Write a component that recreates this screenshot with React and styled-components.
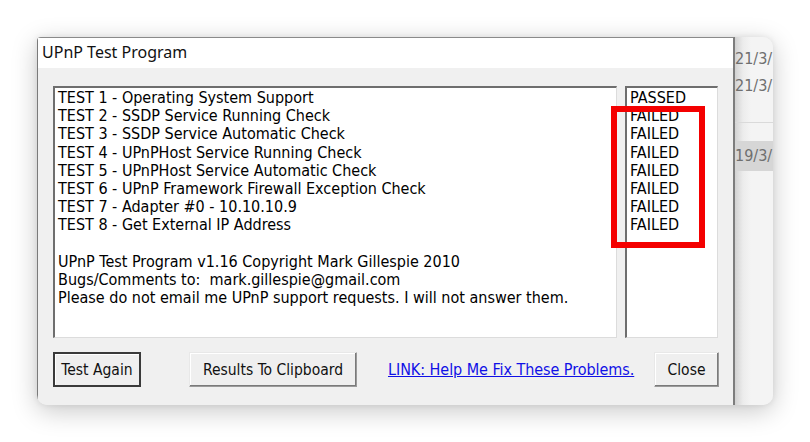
import React from 'react'
import styled, { createGlobalStyle } from 'styled-components'

const GlobalStyle = createGlobalStyle`
  html, body {
    margin: 0;
    padding: 0;
    background: #ffffff;
  }
  body {
    font-family: "Liberation Sans", Arial, sans-serif;
  }
`

const Page = styled.div`
  width: 810px;
  height: 442px;
  padding: 37px 0 0 37px;
  box-sizing: border-box;
`

const Card = styled.div`
  display: flex;
  width: 736px;
  height: 368px;
  border-radius: 4px 10px 10px 10px;
  overflow: hidden;
  background: #f0f0f0;
  box-shadow: 0 6px 26px rgba(0, 0, 0, 0.22), 0 0 6px rgba(0, 0, 0, 0.08);
`

const Dialog = styled.div`
  width: 698px;
  flex: none;
  display: flex;
  flex-direction: column;
  box-sizing: border-box;
  border-top: 1px solid #8a8a8a;
  border-left: 1px solid #7a7a7a;
  border-right: 2px solid #7d7d7d;
  background: #f0f0f0;
`

const TitleBar = styled.div`
  height: 30px;
  flex: none;
  background: #ffffff;
  padding-left: 4px;
  font-family: "Noto Sans", "Open Sans", sans-serif;
  font-size: 16px;
  line-height: 29px;
  color: #111;
`

const Body = styled.div`
  position: relative;
  flex: 1;
  padding: 18px 14px 0 15px;
  display: flex;
  flex-direction: column;
  gap: 14px;
`

const Lists = styled.div`
  display: flex;
  gap: 8px;
  height: 252px;
`

const ListBox = styled.div`
  width: ${p => p.$width}px;
  flex: none;
  box-sizing: border-box;
  background: #ffffff;
  border-top: 2px solid #6e6e6e;
  border-left: 2px solid #6e6e6e;
  border-right: 1px solid #dcdcdc;
  border-bottom: 1px solid #dcdcdc;
  padding: 1px 3px 0;
  font-family: "DejaVu Sans Condensed", "DejaVu Sans", sans-serif;
  font-size: 16px;
  line-height: 18.2px;
  color: #000;
  white-space: pre;
  overflow: hidden;
`

const Line = styled.div`
  height: 18.2px;
`

const Buttons = styled.div`
  display: flex;
  align-items: center;
  height: 35px;
`

const Button = styled.div`
  width: ${p => p.$width}px;
  height: 35px;
  margin-left: ${p => p.$gap || 0}px;
  box-sizing: border-box;
  flex: none;
  display: flex;
  align-items: center;
  justify-content: center;
  background: #efefef;
  font-family: "DejaVu Sans Condensed", "DejaVu Sans", sans-serif;
  font-size: 15.5px;
  color: #111;
  border: ${p => (p.$primary ? '2px' : '1px')} solid ${p => (p.$primary ? '#3a3a3a' : '#9a9a9a')};
  box-shadow: ${p =>
    p.$primary
      ? 'inset 1px 1px 0 #fff'
      : 'inset -1px -1px 0 #7a7a7a, inset 1px 1px 0 #fff'};
  border-top-color: ${p => (p.$primary ? '#3a3a3a' : '#e8e8e8')};
  border-left-color: ${p => (p.$primary ? '#3a3a3a' : '#e8e8e8')};
`

const Link = styled.a`
  margin-left: 31px;
  margin-right: auto;
  font-family: "DejaVu Sans Condensed", "DejaVu Sans", sans-serif;
  font-size: 16px;
  letter-spacing: -0.05px;
  color: #1010e6;
  text-decoration: underline;
  cursor: pointer;
`

const RedFrame = styled.div`
  position: absolute;
  left: 573px;
  top: 38px;
  width: 94px;
  height: 142px;
  box-sizing: border-box;
  border: 6px solid #f40000;
`

const BackWindow = styled.div`
  flex: 1;
  display: flex;
  flex-direction: column;
  background: linear-gradient(to right, #d2d2d2 0px, #ececec 8px, #f4f4f4 16px);
  font-family: "DejaVu Sans Condensed", "DejaVu Sans", sans-serif;
  font-size: 16px;
  color: #6f6f6f;
  white-space: nowrap;
  overflow: hidden;
`

const DateRow = styled.div`
  height: 27px;
  line-height: 27px;
  margin-top: ${p => p.$top || 0}px;
`

const Divider = styled.div`
  margin-top: ${p => p.$top}px;
  height: 1px;
  background: #dadada;
`

const Selected = styled.div`
  margin-top: 18px;
  height: 30px;
  line-height: 30px;
  background: #d6d6d6;
`

const tests = [
  'TEST 1 - Operating System Support',
  'TEST 2 - SSDP Service Running Check',
  'TEST 3 - SSDP Service Automatic Check',
  'TEST 4 - UPnPHost Service Running Check',
  'TEST 5 - UPnPHost Service Automatic Check',
  'TEST 6 - UPnP Framework Firewall Exception Check',
  'TEST 7 - Adapter #0 - 10.10.10.9',
  'TEST 8 - Get External IP Address',
  '',
  'UPnP Test Program v1.16 Copyright Mark Gillespie 2010',
  'Bugs/Comments to:  mark.gillespie@gmail.com',
  'Please do not email me UPnP support requests. I will not answer them.',
]

const results = ['PASSED', 'FAILED', 'FAILED', 'FAILED', 'FAILED', 'FAILED', 'FAILED', 'FAILED']

export default function App() {
  return (
    <>
      <GlobalStyle />
      <Page>
        <Card>
          <Dialog>
            <TitleBar>UPnP Test Program</TitleBar>
            <Body>
              <Lists>
                <ListBox $width={564}>
                  {tests.map((t, i) => (
                    <Line key={i}>{t}</Line>
                  ))}
                </ListBox>
                <ListBox $width={93}>
                  {results.map((r, i) => (
                    <Line key={i}>{r}</Line>
                  ))}
                </ListBox>
              </Lists>
              <Buttons>
                <Button $width={88} $primary>Test Again</Button>
                <Button $width={168} $gap={48}>Results To Clipboard</Button>
                <Link>LINK: Help Me Fix These Problems.</Link>
                <Button $width={65}>Close</Button>
              </Buttons>
              <RedFrame />
            </Body>
          </Dialog>
          <BackWindow>
            <DateRow $top={8}>21/3/</DateRow>
            <DateRow>21/3/</DateRow>
            <Divider $top={23} />
            <Selected>19/3/</Selected>
          </BackWindow>
        </Card>
      </Page>
    </>
  )
}
